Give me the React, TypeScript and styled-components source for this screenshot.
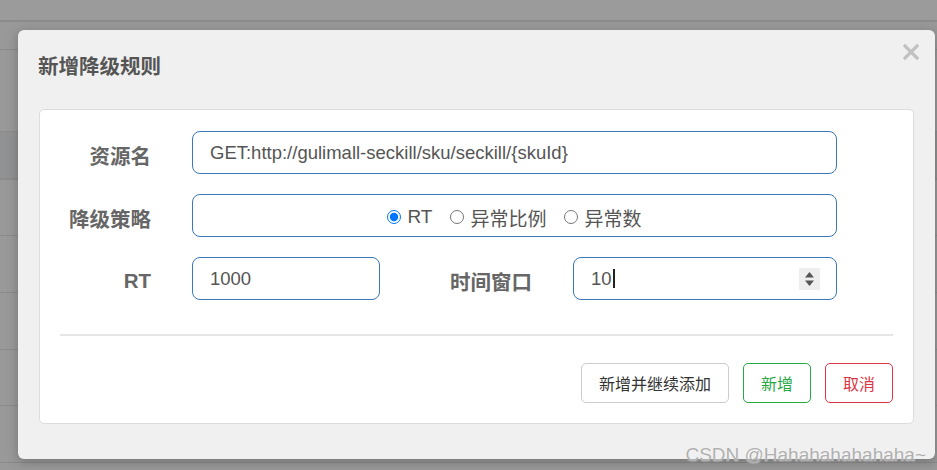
import styled, { createGlobalStyle } from "styled-components";

const GlobalStyle = createGlobalStyle`
	html, body {
		margin: 0;
		padding: 0;
	}
	body {
		background: #999;
		font-family: "Liberation Sans", "Noto Sans CJK SC", sans-serif;
	}
`;

const Page = styled.div`
	position: relative;
	width: 937px;
	height: 470px;
	overflow: hidden;
	background: #999;
`;

const Backdrop = styled.div`
	display: flex;
	flex-direction: column;
`;

const BackRow = styled.div<{ $h: number; $tone?: string; $line?: number }>`
	height: ${(p) => p.$h}px;
	flex-shrink: 0;
	background: ${(p) => p.$tone ?? "#999"};
	border-bottom: ${(p) => p.$line ?? 1}px solid #8b8b8b;
`;

const Modal = styled.div`
	position: absolute;
	left: 18px;
	top: 30px;
	width: 917px;
	height: 429px;
	background: #f0f0f0;
	border-radius: 6px;
	box-shadow: 0 3px 12px rgba(0, 0, 0, 0.25);
	display: flex;
	flex-direction: column;
`;

const Header = styled.div`
	height: 79px;
	padding: 26px 20px 0;
	box-sizing: border-box;
`;

const Title = styled.h4`
	margin: 0;
	font-size: 20.5px;
	line-height: 22px;
	font-weight: 700;
	color: #555;
`;

const Close = styled.button`
	position: absolute;
	right: 16px;
	top: 14px;
	width: 16px;
	height: 16px;
	padding: 0;
	border: 0;
	background: none;
	display: flex;
`;

const Panel = styled.div`
	margin: 0 21px;
	height: 315px;
	box-sizing: border-box;
	background: #fff;
	border: 1px solid #ddd;
	border-radius: 5px;
	padding-top: 21px;
`;

const Form = styled.div`
	display: flex;
	flex-direction: column;
	gap: 20px;
	padding-right: 76px;
`;

const Row = styled.div`
	display: flex;
	align-items: center;
	height: 43px;
`;

const Label = styled.label`
	width: 111px;
	flex-shrink: 0;
	margin-right: 41px;
	padding-top: 5px;
	text-align: right;
	font-size: 20.5px;
	font-weight: 700;
	color: #666;
`;

const SideLabel = styled(Label)`
	margin-left: 41px;
`;

const Field = styled.div<{ $width?: number; $center?: boolean }>`
	position: relative;
	box-sizing: border-box;
	height: 43px;
	${(p) => (p.$width ? `width: ${p.$width}px;` : "flex: 1;")}
	display: flex;
	align-items: center;
	justify-content: ${(p) => (p.$center ? "center" : "flex-start")};
	padding: 0 17px;
	border: 1px solid #3a78b9;
	border-radius: 8px;
	background: #fff;
	font-size: 18.5px;
	color: #555;
	white-space: nowrap;
`;

const Caret = styled.span`
	display: inline-block;
	width: 2px;
	height: 19px;
	margin-left: 1px;
	background: #222;
`;

const Spinner = styled.span`
	position: absolute;
	right: 16px;
	top: 10px;
	width: 21px;
	height: 22px;
	background: #eee;
	display: flex;
	align-items: center;
	justify-content: center;
`;

const Options = styled.div`
	display: flex;
	align-items: center;
	gap: 18px;
	padding-top: 3px;
`;

const Option = styled.label`
	display: flex;
	align-items: center;
	gap: 6px;
	font-size: 19px;
	color: #555;

	input {
		width: 14px;
		height: 14px;
		margin: 0;
		accent-color: #0075ff;
	}
`;

const Divider = styled.hr`
	margin: 34px 20px 0;
	border: 0;
	border-top: 2px solid #e5e5e5;
`;

const Actions = styled.div`
	display: flex;
	justify-content: flex-end;
	gap: 14px;
	margin: 27px 20px 0;
`;

const Button = styled.button<{ $tone: string; $text: string }>`
	height: 40px;
	padding: 0 17px;
	background: #fff;
	border: 1px solid ${(p) => p.$tone};
	border-radius: 5px;
	color: ${(p) => p.$text};
	font-family: "Liberation Sans", "Noto Sans CJK SC", sans-serif;
	font-size: 16px;
`;

const Watermark = styled.div`
	position: absolute;
	right: 11px;
	bottom: 4px;
	font-size: 19px;
	color: #b0b0b0;
	text-shadow: 0 0 2px rgba(255, 255, 255, 0.8);
	pointer-events: none;
`;

const rows = [
	{ h: 20, tone: "#9b9b9b", line: 2 },
	{ h: 27 },
	{ h: 81 },
	{ h: 46, tone: "#919293", line: 2 },
	{ h: 55 },
	{ h: 56 },
	{ h: 56 },
	{ h: 55 },
	{ h: 56 },
	{ h: 20 },
];

function App() {
	return (
		<Page>
			<GlobalStyle />
			<Backdrop>
				{rows.map((r, i) => (
					<BackRow key={i} $h={r.h} $tone={r.tone} $line={r.line} />
				))}
			</Backdrop>
			<Modal>
				<Header>
					<Title>新增降级规则</Title>
				</Header>
				<Close aria-label="close">
					<svg width="16" height="16" viewBox="0 0 16 16">
						<path
							d="M2 2 L14 14 M14 2 L2 14"
							stroke="#c2c2c2"
							strokeWidth="3.2"
							strokeLinecap="square"
						/>
					</svg>
				</Close>
				<Panel>
					<Form>
						<Row>
							<Label>资源名</Label>
							<Field>GET:http://gulimall-seckill/sku/seckill/{"{skuId}"}</Field>
						</Row>
						<Row>
							<Label>降级策略</Label>
							<Field $center>
								<Options>
									<Option>
										<input type="radio" name="grade" defaultChecked />
										RT
									</Option>
									<Option>
										<input type="radio" name="grade" />
										异常比例
									</Option>
									<Option>
										<input type="radio" name="grade" />
										异常数
									</Option>
								</Options>
							</Field>
						</Row>
						<Row>
							<Label>RT</Label>
							<Field $width={188}>1000</Field>
							<SideLabel>时间窗口</SideLabel>
							<Field>
								10
								<Caret />
								<Spinner>
									<svg width="11" height="16" viewBox="0 0 11 16">
										<path d="M5.5 1 L10 6.5 H1 Z M1 9.5 H10 L5.5 15 Z" fill="#555" />
									</svg>
								</Spinner>
							</Field>
						</Row>
					</Form>
					<Divider />
					<Actions>
						<Button $tone="#ccc" $text="#333">
							新增并继续添加
						</Button>
						<Button $tone="#28a745" $text="#28a745">
							新增
						</Button>
						<Button $tone="#dc3545" $text="#dc3545">
							取消
						</Button>
					</Actions>
				</Panel>
			</Modal>
			<Watermark>CSDN @Hahahahahahaha~</Watermark>
		</Page>
	);
}

export default App;
